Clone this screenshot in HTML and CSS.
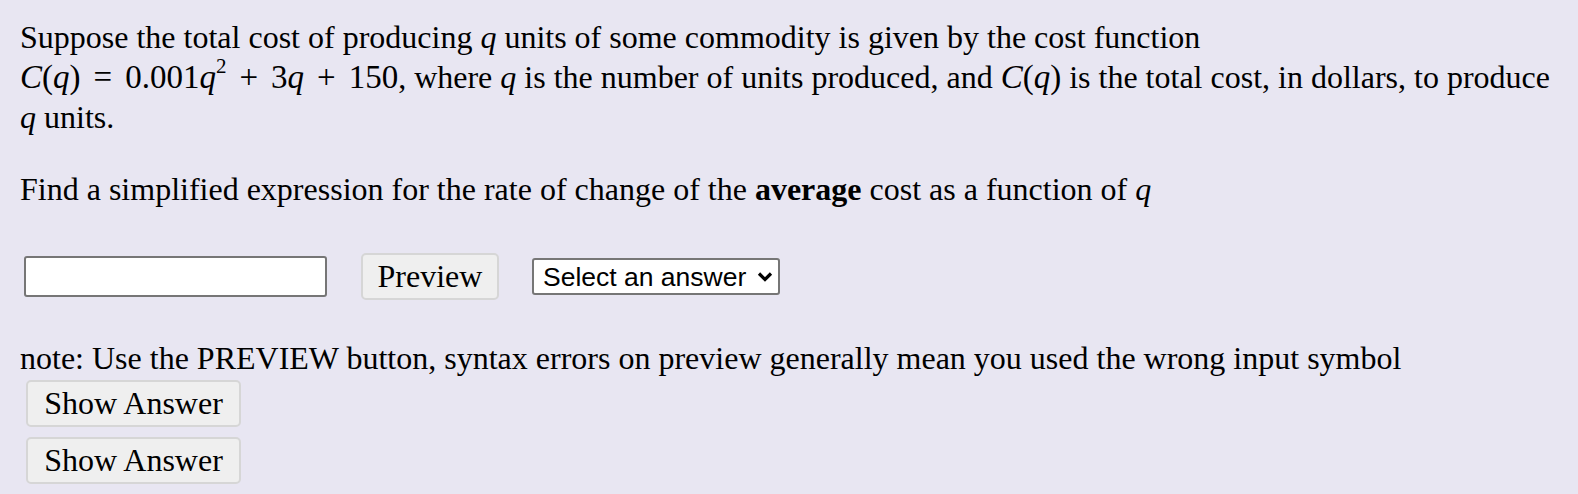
FILE: index.html
```html
<!DOCTYPE html>
<html lang="en">
<head>
    <meta charset="UTF-8">
    <title>Question</title>
    <link rel="stylesheet" href="styles.css">
</head>
<body>
    <div class="question">
        <p class="intro">Suppose the total cost of producing <i class="v">q</i> units of some commodity is given by the cost function<br>
        <span class="math"><i class="v">C</i>(<i class="v">q</i>)<span class="op">=</span>0.001<i class="v">q</i><sup>2</sup><span class="op">+</span>3<i class="v">q</i><span class="op">+</span>150</span>, where <i class="v">q</i> is the number of units produced, and <span class="math"><i class="v">C</i>(<i class="v">q</i>)</span> is the total cost, in dollars, to produce<br>
        <i class="v">q</i> units.</p>

        <p class="task">Find a simplified expression for the rate of change of the <b>average</b> cost as a function of <i class="v">q</i></p>

        <div class="answer_row">
            <input type="text" class="answer_box">
            <button class="btn preview">Preview</button>
            <span class="pick_wrap">
                <select class="pick">
                    <option>Select an answer</option>
                </select>
                <svg class="chev" width="16" height="11" viewBox="0 0 16 11"><path d="M2 2.5 L8 8.5 L14 2.5" fill="none" stroke="#000" stroke-width="3.2"/></svg>
            </span>
        </div>

        <p class="note">note: Use the PREVIEW button, syntax errors on preview generally mean you used the wrong input symbol</p>
        <div class="show_list">
            <button class="btn show">Show Answer</button>
            <button class="btn show">Show Answer</button>
        </div>
    </div>
</body>
</html>
```

FILE: styles.css
```css
body { margin: 0; background: #e8e6f2; font-family: "Liberation Serif", "Times New Roman", serif; font-size: 32px; color: #000; }
.question { padding: 17px 20px 0 20px; }
.question p { margin: 0; line-height: 40px; }
.v { font-style: italic; }
.math { font-size: 33px; }
.math sup { font-size: 21px; line-height: 0; vertical-align: 15px; }
.op { padding: 0 13px; }
.task { margin-top: 32px !important; }
.answer_row { display: flex; align-items: center; margin-top: 44px; padding-left: 4px; }
.answer_box { width: 303px; height: 41px; box-sizing: border-box; border: 2px solid #767676; border-radius: 3px; background: #fff; }
.btn { font-family: "Liberation Serif", "Times New Roman", serif; font-size: 32px; background: #efefef; border: 2px solid #d6d6d6; border-radius: 5px; color: #000; }
.preview { margin-left: 34px; width: 138px; height: 47px; padding: 0; }
.pick_wrap { position: relative; margin-left: 33px; }
.pick { appearance: none; width: 248px; height: 37px; padding: 0 0 0 9px; font-family: "Liberation Sans", Arial, sans-serif; font-size: 26.5px; border: 2px solid #767676; border-radius: 3px; background: #fff; color: #000; display: block; }
.chev { position: absolute; right: 7px; top: 13px; pointer-events: none; }
.note { margin-top: 38px !important; }
.show_list { display: flex; flex-direction: column; align-items: flex-start; gap: 10px; padding-left: 6px; margin-top: 2px; }
.show { width: 215px; height: 47px; padding: 0; }
```
